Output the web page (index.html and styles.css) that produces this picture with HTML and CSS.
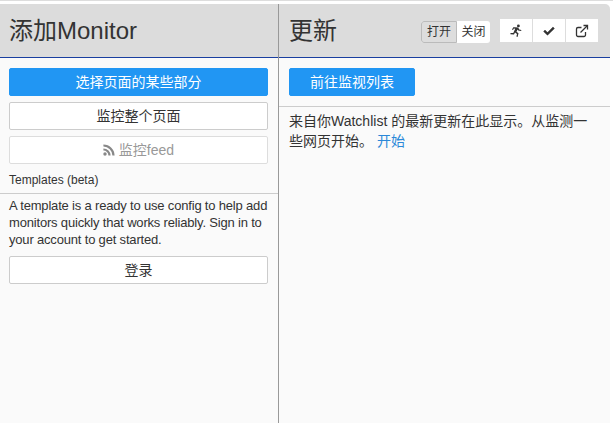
FILE: index.html
```html
<!DOCTYPE html>
<html lang="zh">
<head>
    <meta charset="UTF-8">
    <title>Watchlist</title>
    <link rel="stylesheet" href="styles.css">
</head>
<body>
    <div class="popup">
        <div class="pane pane-left">
            <div class="pane-head">
                <h2>添加Monitor</h2>
            </div>
            <div class="actions">
                <button class="btn btn-primary">选择页面的某些部分</button>
                <button class="btn">监控整个页面</button>
                <button class="btn btn-disabled">
                    <svg class="rss" viewBox="0 0 12 12" width="12" height="12"><circle cx="2" cy="10" r="1.7"/><path d="M.4 4.400v2.200a5 5 0 0 1 5 5h2.200A7.200 7.200 0 0 0 .4 4.400z"/><path d="M.4.4v2.200a9 9 0 0 1 9 9h2.200A11.200 11.200 0 0 0 .4.4z"/></svg>
                    监控feed
                </button>
            </div>
            <div class="section-title">Templates (beta)</div>
            <div class="templates">
                <p>A template is a ready to use config to help add monitors quickly that works reliably. Sign in to your account to get started.</p>
                <button class="btn">登录</button>
            </div>
        </div>
        <div class="pane pane-right">
            <div class="pane-head">
                <h2>更新</h2>
                <div class="tools">
                    <div class="toggle">
                        <span class="toggle-item active">打开</span>
                        <span class="toggle-item">关闭</span>
                    </div>
                    <div class="icon-group">
                        <span class="icon-btn">
                            <svg viewBox="0 0 14 14" width="14" height="14"><circle cx="9.400" cy="1.900" r="1.400"/><path d="M6 3.200l3.200.3 1 2 2.200.5-.3 1-2.900-.6-.7-1-1 2.300 2 1.600-.9 3.600-1.200-.3.600-2.700-2-1.400-1 2-3.600-.3.100-1.200 2.800.1 1.900-4.300-1.300-.2-.9 1.500-1-.6 1.300-2.200z"/></svg>
                        </span>
                        <span class="icon-btn">
                            <svg viewBox="0 0 14 14" width="14" height="14"><path d="M1.300 7.400l1.700-1.700 2.500 2.500 5.500-5.500 1.700 1.700-7.200 7.200z"/></svg>
                        </span>
                        <span class="icon-btn">
                            <svg viewBox="0 0 14 14" width="14" height="14" class="outline"><path d="M10.500 8v3a1.500 1.500 0 0 1-1.500 1.500H3A1.500 1.500 0 0 1 1.500 11V5A1.500 1.500 0 0 1 3 3.500h3.500"/><path d="M5.500 8.500L12 2"/><path d="M8.500 1.500h4v4"/></svg>
                        </span>
                    </div>
                </div>
            </div>
            <div class="actions actions-right">
                <button class="btn btn-primary btn-list">前往监视列表</button>
            </div>
            <div class="updates">
                来自你Watchlist 的最新更新在此显示。从监测一些网页开始。 <a href="#">开始</a>
            </div>
        </div>
    </div>
</body>
</html>
```

FILE: styles.css
```css
html, body {
    height: 100%;
}
body {
    margin: 0;
    background: white;
    border-top: 1px solid #ddd;
    box-sizing: border-box;
    font-family: 'Liberation Sans', 'Noto Sans CJK SC', sans-serif;
    font-size: 14px;
    line-height: 20px;
    color: #333;
    overflow: hidden;
}
.popup {
    display: flex;
    height: 419px;
    margin-top: 3px;
    margin-right: 3px;
    background: #fafafa;
    border-top-right-radius: 5px;
    overflow: hidden;
}
.pane-left {
    width: 278px;
    border-right: 1px solid #999;
}
.pane-right {
    flex: 1;
}
.pane-head {
    display: flex;
    align-items: center;
    justify-content: space-between;
    height: 53px;
    padding: 0 12px 0 10px;
    background: #dcdcdc;
    border-bottom: 1px solid #1a3fa0;
}
.pane-left .pane-head {
    padding-left: 9px;
}
.pane-head h2 {
    margin: 0;
    font-size: 24px;
    font-weight: normal;
    line-height: 52px;
    color: #333;
}
.actions {
    display: flex;
    flex-direction: column;
    gap: 6px;
    padding: 10px 10px 0 9px;
}
.actions-right {
    padding: 10px 10px 10px;
    border-bottom: 1px solid #ccc;
}
.btn {
    display: block;
    width: 100%;
    height: 28px;
    padding: 0 0 2px;
    background: white;
    border: 1px solid #ccc;
    border-radius: 2px;
    font-family: inherit;
    font-size: 14px;
    color: #333;
    cursor: pointer;
}
.btn-primary {
    background: #2196f3;
    border-color: #2196f3;
    color: white;
}
.btn-list {
    width: 126px;
}
.btn-disabled {
    color: #999;
    border-color: #ddd;
}
.rss {
    fill: #888;
    vertical-align: -1px;
}
.section-title {
    padding: 8px 9px 4px;
    font-size: 12px;
    line-height: 17px;
    border-bottom: 1px solid #ccc;
}
.templates {
    padding: 3px 10px 0 9px;
}
.templates p {
    margin: 0 0 8px;
    font-size: 13px;
    line-height: 17px;
    letter-spacing: -0.18px;
}
.tools {
    display: flex;
    gap: 10px;
    align-items: center;
}
.toggle {
    display: flex;
    height: 22px;
    margin-top: 2px;
    background: white;
    border-radius: 3px;
    font-size: 12px;
    line-height: 22px;
}
.toggle-item {
    width: 33px;
    text-align: center;
}
.toggle-item.active {
    width: 36px;
    background: #ddd;
    border: 1px solid #bbb;
    border-radius: 3px 0 0 3px;
    line-height: 20px;
    box-sizing: border-box;
}
.icon-group {
    display: flex;
    gap: 1px;
    height: 23px;
    background: #ddd;
}
.icon-btn {
    display: flex;
    align-items: center;
    justify-content: center;
    width: 32px;
    background: white;
}
.icon-btn svg {
    fill: #333;
}
.icon-btn svg.outline {
    fill: none;
    stroke: #333;
    stroke-width: 1.3;
}
.updates {
    padding: 4px 10px;
}
.updates a {
    color: #2b88d8;
    text-decoration: none;
}
```
